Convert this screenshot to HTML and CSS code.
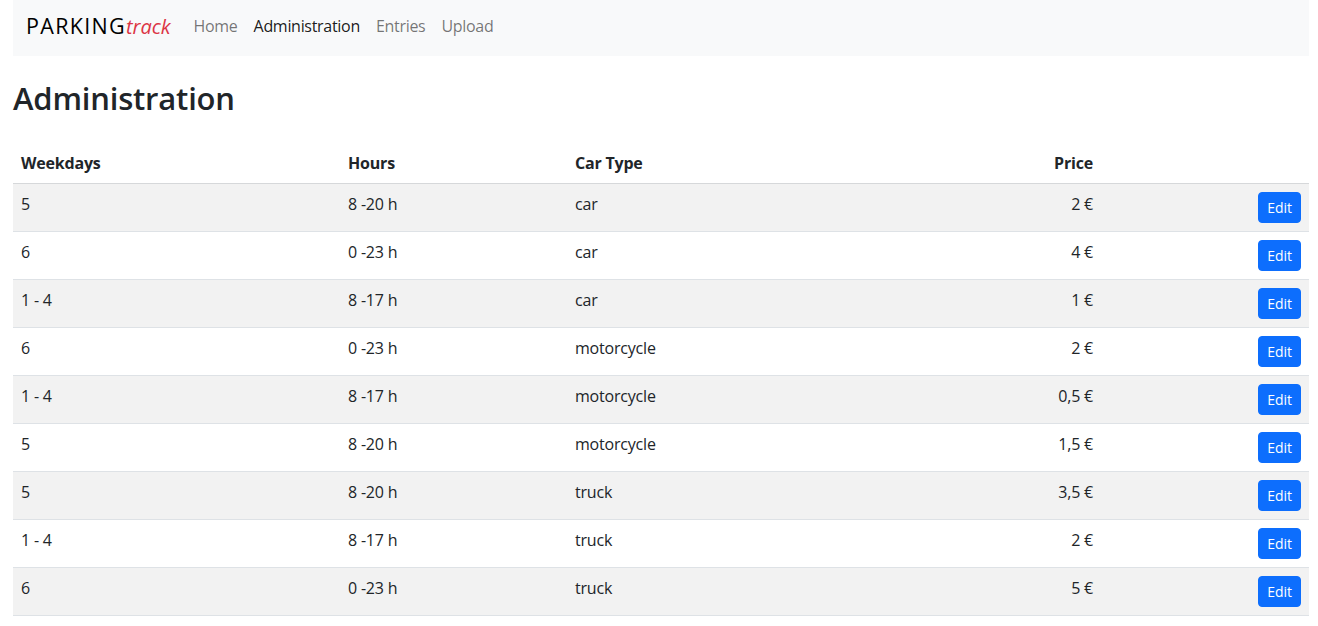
FILE: index.html
```html
<!DOCTYPE html>
<html lang="en">
<head>
<meta charset="utf-8">
<title>PARKINGtrack - Administration</title>
<link rel="stylesheet" href="styles.css">
</head>
<body>
<div class="container">
  <nav class="navbar">
    <a class="brand" href="#"><span class="brand-main">PARKING</span><span class="brand-accent">track</span></a>
    <ul class="nav">
      <li><a class="nav-link" href="#">Home</a></li>
      <li><a class="nav-link active" href="#">Administration</a></li>
      <li><a class="nav-link" href="#">Entries</a></li>
      <li><a class="nav-link" href="#">Upload</a></li>
    </ul>
  </nav>
  <h1 class="title">Administration</h1>
  <table class="table">
    <colgroup>
      <col class="c1"><col class="c2"><col class="c3"><col class="c4"><col class="c5">
    </colgroup>
    <thead>
      <tr><th>Weekdays</th><th>Hours</th><th>Car Type</th><th class="end">Price</th><th></th></tr>
    </thead>
    <tbody>
      <tr><td>5</td><td>8 -20 h</td><td>car</td><td class="end">2 €</td><td class="end action"><button class="btn">Edit</button></td></tr>
      <tr><td>6</td><td>0 -23 h</td><td>car</td><td class="end">4 €</td><td class="end action"><button class="btn">Edit</button></td></tr>
      <tr><td>1 - 4</td><td>8 -17 h</td><td>car</td><td class="end">1 €</td><td class="end action"><button class="btn">Edit</button></td></tr>
      <tr><td>6</td><td>0 -23 h</td><td>motorcycle</td><td class="end">2 €</td><td class="end action"><button class="btn">Edit</button></td></tr>
      <tr><td>1 - 4</td><td>8 -17 h</td><td>motorcycle</td><td class="end">0,5 €</td><td class="end action"><button class="btn">Edit</button></td></tr>
      <tr><td>5</td><td>8 -20 h</td><td>motorcycle</td><td class="end">1,5 €</td><td class="end action"><button class="btn">Edit</button></td></tr>
      <tr><td>5</td><td>8 -20 h</td><td>truck</td><td class="end">3,5 €</td><td class="end action"><button class="btn">Edit</button></td></tr>
      <tr><td>1 - 4</td><td>8 -17 h</td><td>truck</td><td class="end">2 €</td><td class="end action"><button class="btn">Edit</button></td></tr>
      <tr><td>6</td><td>0 -23 h</td><td>truck</td><td class="end">5 €</td><td class="end action"><button class="btn">Edit</button></td></tr>
    </tbody>
  </table>
</div>
</body>
</html>
```
FILE: styles.css
```css
* { box-sizing: border-box; }
html, body { margin: 0; padding: 0; }
body {
  font-family: "Open Sans", "Noto Sans", sans-serif;
  font-size: 16px;
  line-height: 1.5;
  color: #212529;
  background: #fff;
}
.container {
  width: 1296px;
  margin-left: 13px;
}
.navbar {
  display: flex;
  align-items: center;
  height: 56px;
  padding: 6px 13px 10px;
  background: #f8f9fa;
}
.brand {
  font-size: 20px;
  line-height: 30px;
  padding: 5px 0;
  margin-right: 15px;
  color: #000;
  text-decoration: none;
  white-space: nowrap;
}
.brand-main {
  font-size: 21.5px;
  letter-spacing: 1.3px;
}
.brand-accent {
  font-style: italic;
  color: #dc3545;
}
.nav {
  display: flex;
  list-style: none;
  margin: 0;
  padding: 0;
}
.nav-link {
  display: block;
  padding: 8px 8px;
  color: rgba(0,0,0,0.55);
  text-decoration: none;
  letter-spacing: -0.3px;
}
.nav-link.active { color: rgba(0,0,0,0.9); }
.title {
  font-size: 31px;
  font-weight: 600;
  line-height: 1.2;
  margin: 24px 0 26px;
  letter-spacing: -0.2px;
}
.table {
  width: 100%;
  border-collapse: collapse;
  table-layout: fixed;
}
.c1 { width: 327px; }
.c2 { width: 227px; }
.c3 { width: 350px; }
.c4 { width: 184px; }
.c5 { width: 208px; }
.table th, .table td {
  padding: 8px;
  border-bottom: 1px solid #dee2e6;
  text-align: left;
  vertical-align: top;
  letter-spacing: -0.2px;
}
.table th { font-weight: 700; border-bottom-color: #d6d8da; }
.table .end { text-align: right; }
.table tbody tr:nth-child(odd) td { background: #f2f2f2; }
.btn {
  display: block;
  margin-left: auto;
  height: 31px;
  font-family: inherit;
  font-size: 14px;
  line-height: 1.5;
  padding: 4px 8px;
  border: 1px solid #0d6efd;
  border-radius: 4px;
  background: #0d6efd;
  color: #fff;
  cursor: pointer;
}
```
